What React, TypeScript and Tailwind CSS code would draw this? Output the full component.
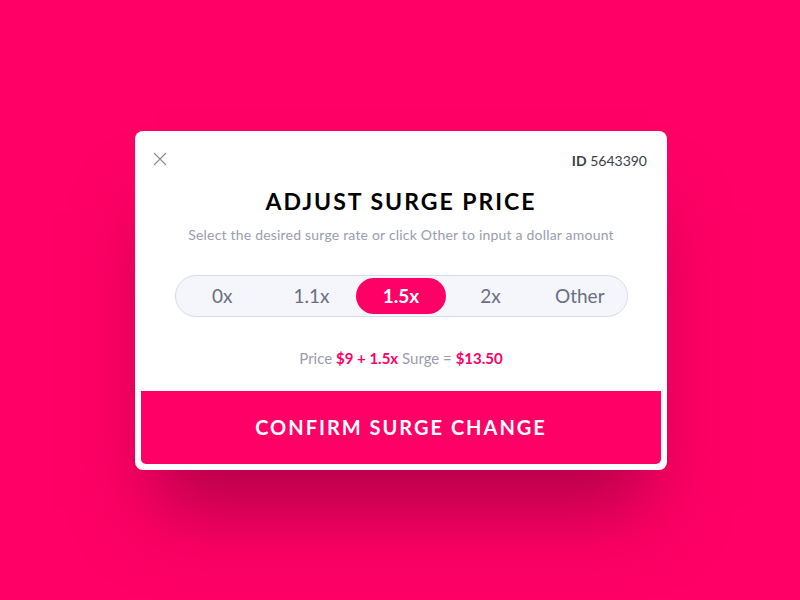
import React from 'react';

const rates = ['0x', '1.1x', '1.5x', '2x', 'Other'];

export default function App() {
  const [selected, setSelected] = React.useState('1.5x');

  return (
    <div
      className="w-[800px] h-[600px] bg-[#ff0066] flex items-start justify-center pt-[131px] pl-[2px]"
      style={{ fontFamily: 'Lato, "Noto Sans", sans-serif' }}
    >
      <div className="w-[532px] bg-white rounded-[8px] p-[6px] pt-0 shadow-[0_60px_70px_-20px_rgba(120,0,50,0.55)]">
        <div className="flex items-start justify-between pt-[20px] pl-[12px] pr-[14px] h-[40px]">
          <button className="text-[#8a8d9c] mt-[1px]">
            <svg width="14" height="14" viewBox="0 0 14 14" fill="none" stroke="currentColor" strokeWidth="1.2">
              <path d="M1 1L13 13M13 1L1 13" />
            </svg>
          </button>
          <div className="text-[14px] leading-none text-[#3b3d4a] pt-[3px]">
            <span className="font-bold">ID</span> 5643390
          </div>
        </div>

        <h1 className="text-center text-[23px] font-bold tracking-[2px] text-black mt-[19px] leading-none">
          ADJUST SURGE PRICE
        </h1>
        <p className="text-center text-[14px] text-[#9a9cad] mt-[11px] tracking-[0.2px]">
          Select the desired surge rate or click Other to input a dollar amount
        </p>

        <div className="mx-auto mt-[30px] w-[453px] h-[42px] rounded-full bg-[#f5f6fb] border border-[#d9dce8] grid grid-cols-5 items-center px-[2px]">
          {rates.map(r => (
            <button
              key={r}
              onClick={() => setSelected(r)}
              className={`h-[36px] rounded-full text-[19px] ${
                selected === r ? 'bg-[#ff0066] text-white font-bold' : 'text-[#6b6e82]'
              }`}
            >
              {r}
            </button>
          ))}
        </div>

        <p className="text-center text-[15px] text-[#9a9cad] mt-[30px]">
          Price <span className="font-bold text-[#ff0066]">$9 + 1.5x</span> Surge = <span className="font-bold text-[#ff0066]">$13.50</span>
        </p>

        <button className="mt-[21px] w-full h-[73px] bg-[#ff0066] rounded-b-[5px] text-white text-[20px] font-bold tracking-[2px]">
          CONFIRM SURGE CHANGE
        </button>
      </div>
    </div>
  );
}
